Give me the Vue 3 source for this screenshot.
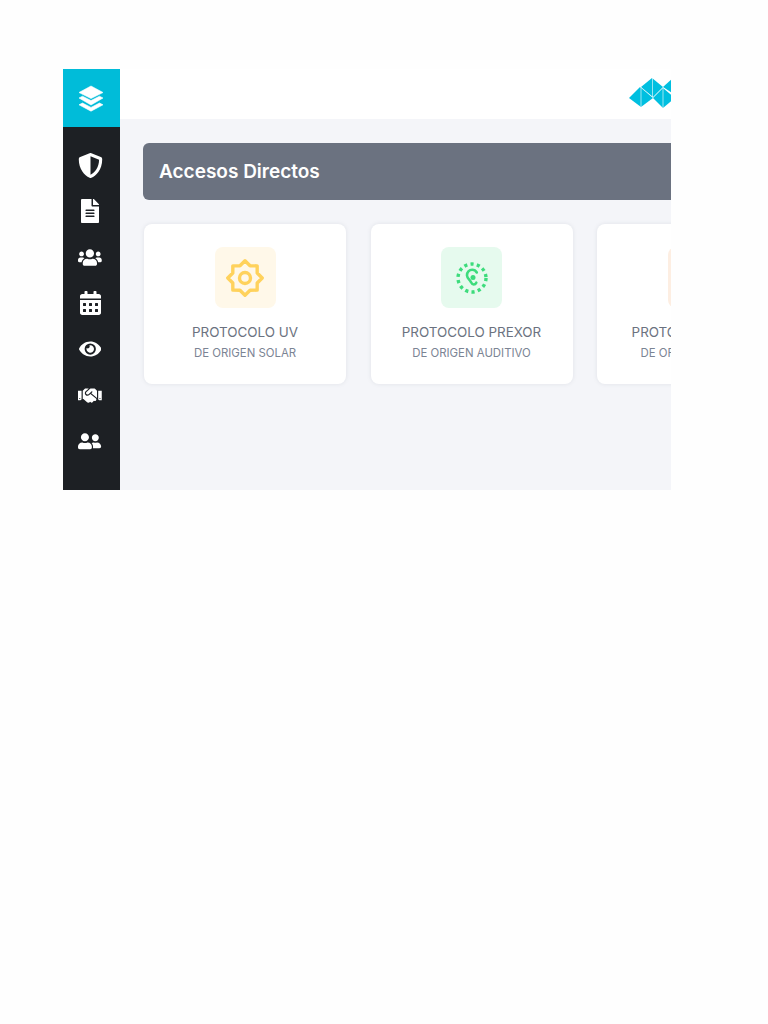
<script setup>
const navIcons = [
  { vb: '0 0 512 512', h: 25, d: 'M466.5 83.7l-192-80a48.15 48.15 0 0 0-36.9 0l-192 80C27.7 91.1 16 108.6 16 128c0 198.5 114.5 335.7 221.5 380.3 11.8 4.9 25.1 4.9 36.9 0C360.1 472.6 496 349.3 496 128c0-19.4-11.7-36.9-29.5-44.3zM256.1 446.3l-.1-381 175.9 73.3c-3.3 151.4-82.1 261.1-175.8 307.7z' },
  { vb: '0 0 384 512', h: 24, d: 'M224 136V0H24C10.7 0 0 10.7 0 24v464c0 13.3 10.7 24 24 24h336c13.3 0 24-10.7 24-24V160H248c-13.2 0-24-10.8-24-24zm64 236c0 6.6-5.4 12-12 12H108c-6.6 0-12-5.4-12-12v-8c0-6.6 5.4-12 12-12h168c6.6 0 12 5.4 12 12v8zm0-64c0 6.6-5.4 12-12 12H108c-6.6 0-12-5.4-12-12v-8c0-6.6 5.4-12 12-12h168c6.6 0 12 5.4 12 12v8zm0-72v8c0 6.6-5.4 12-12 12H108c-6.6 0-12-5.4-12-12v-8c0-6.6 5.4-12 12-12h168c6.6 0 12 5.4 12 12zm96-114.1v6.1H256V0h6.1c6.4 0 12.5 2.5 17 7l97.9 98c4.5 4.5 7 10.6 7 16.9z' },
  { vb: '0 0 640 512', h: 19, d: 'M96 224c35.3 0 64-28.7 64-64s-28.7-64-64-64-64 28.7-64 64 28.7 64 64 64zm448 0c35.3 0 64-28.7 64-64s-28.7-64-64-64-64 28.7-64 64 28.7 64 64 64zm32 32h-64c-17.6 0-33.5 7.1-45.1 18.6 40.3 22.1 68.9 62 75.1 109.4h66c17.7 0 32-14.3 32-32v-32c0-35.3-28.7-64-64-64zm-256 0c61.9 0 112-50.1 112-112S381.9 32 320 32 208 82.1 208 144s50.1 112 112 112zm76.8 32h-8.3c-20.8 10-43.9 16-68.5 16s-47.6-6-68.5-16h-8.3C179.6 288 128 339.6 128 403.2V432c0 26.5 21.5 48 48 48h288c26.5 0 48-21.5 48-48v-28.8c0-63.6-51.6-115.2-115.2-115.2zm-223.7-13.4C161.5 263.1 145.6 256 128 256H64c-35.3 0-64 28.7-64 64v32c0 17.7 14.3 32 32 32h65.9c6.3-47.4 34.9-87.3 75.2-109.4z' },
  { vb: '0 0 448 512', h: 24, d: 'M0 464c0 26.5 21.5 48 48 48h352c26.5 0 48-21.5 48-48V192H0v272zm320-196c0-6.6 5.4-12 12-12h40c6.6 0 12 5.4 12 12v40c0 6.6-5.4 12-12 12h-40c-6.6 0-12-5.4-12-12v-40zm0 128c0-6.6 5.4-12 12-12h40c6.6 0 12 5.4 12 12v40c0 6.6-5.4 12-12 12h-40c-6.6 0-12-5.4-12-12v-40zM192 268c0-6.6 5.4-12 12-12h40c6.6 0 12 5.4 12 12v40c0 6.6-5.4 12-12 12h-40c-6.6 0-12-5.4-12-12v-40zm0 128c0-6.6 5.4-12 12-12h40c6.6 0 12 5.4 12 12v40c0 6.6-5.4 12-12 12h-40c-6.6 0-12-5.4-12-12v-40zM64 268c0-6.6 5.4-12 12-12h40c6.6 0 12 5.4 12 12v40c0 6.6-5.4 12-12 12H76c-6.6 0-12-5.4-12-12v-40zm0 128c0-6.6 5.4-12 12-12h40c6.6 0 12 5.4 12 12v40c0 6.6-5.4 12-12 12H76c-6.6 0-12-5.4-12-12v-40zM400 64h-48V16c0-8.8-7.2-16-16-16h-32c-8.8 0-16 7.2-16 16v48H160V16c0-8.8-7.2-16-16-16h-32c-8.8 0-16 7.2-16 16v48H48C21.5 64 0 85.5 0 112v48h448v-48c0-26.5-21.5-48-48-48z' },
  { vb: '0 0 576 512', h: 20, d: 'M572.52 241.4C518.29 135.59 410.93 64 288 64S57.68 135.64 3.48 241.41a32.35 32.35 0 0 0 0 29.19C57.71 376.41 165.07 448 288 448s230.32-71.64 284.52-177.41a32.35 32.35 0 0 0 0-29.19zM288 400a144 144 0 1 1 144-144 143.93 143.93 0 0 1-144 144zm0-240a95.31 95.31 0 0 0-25.31 3.79 47.85 47.85 0 0 1-66.9 66.9A95.78 95.78 0 1 0 288 160z' },
  { vb: '0 0 640 512', h: 19, d: 'M434.7 64h-85.9c-8 0-15.7 3-21.6 8.4l-98.3 90c-.1.1-.2.3-.3.4-16.6 15.6-16.3 40.5-2.1 56 12.7 13.9 39.4 17.6 56.1 2.7.1-.1.3-.1.4-.2l79.9-73.2c6.5-5.9 16.7-5.5 22.6 1 6 6.5 5.5 16.6-1 22.6l-26.1 23.9L504 313.8c2.9 2.4 5.5 5 7.9 7.7V128l-54.6-54.6c-5.9-6-14.1-9.4-22.6-9.4zM544 128.2v223.9c0 17.7 14.3 32 32 32h64V128.2h-96zm48 223.9c-8.8 0-16-7.2-16-16s7.2-16 16-16 16 7.2 16 16-7.2 16-16 16zM0 384h64c17.7 0 32-14.3 32-32V128.2H0V384zm48-63.9c8.8 0 16 7.2 16 16s-7.2 16-16 16-16-7.2-16-16c0-8.9 7.2-16 16-16zm435.9 18.6L334.6 217.5l-30 27.5c-29.7 27.1-75.2 24.5-101.7-4.4-26.9-29.4-24.8-74.9 4.4-101.7L289.1 64h-83.8c-8.5 0-16.6 3.4-22.6 9.4L128 128v223.9h18.3l90.5 81.9c27.4 22.3 67.7 18.1 90-9.3l.2-.2 17.9 15.5c15.9 13 39.4 10.5 52.3-5.4l31.4-38.6 5.4 4.4c13.7 11.1 33.9 9.1 45-4.7l9.5-11.7c11.2-13.8 9.1-33.9-4.6-45.1z' },
  { vb: '0 0 640 512', h: 18.5, d: 'M192 256c61.9 0 112-50.1 112-112S253.9 32 192 32 80 82.1 80 144s50.1 112 112 112zm76.8 32h-8.3c-20.8 10-43.9 16-68.5 16s-47.6-6-68.5-16h-8.3C51.6 288 0 339.6 0 403.2V432c0 26.5 21.5 48 48 48h288c26.5 0 48-21.5 48-48v-28.8c0-63.6-51.6-115.2-115.2-115.2zM480 256c53 0 96-43 96-96s-43-96-96-96-96 43-96 96 43 96 96 96zm48 32h-3.8c-13.9 4.8-28.6 8-44.2 8s-30.3-3.2-44.2-8H432c-20.4 0-39.2 5.9-55.7 15.4 24.4 26.3 39.7 61.2 39.7 99.8v38.4c0 2.2-.5 4.3-.6 6.4H592c26.5 0 48-21.5 48-48 0-61.9-50.1-112-112-112z' },
]

const cards = [
  { kind: 'sun', title: 'PROTOCOLO UV', sub: 'DE ORIGEN SOLAR' },
  { kind: 'ear', title: 'PROTOCOLO PREXOR', sub: 'DE ORIGEN AUDITIVO' },
  { kind: 'other', title: 'PROTOCOLO TMERT', sub: 'DE ORIGEN QUÍMICO' },
]

const sunPoints = (() => {
  const pts = []
  for (let i = 0; i < 16; i++) {
    const r = i % 2 === 0 ? 17.2 : 13.2
    const a = (i * Math.PI) / 8 - Math.PI / 2
    pts.push(`${(20 + r * Math.cos(a)).toFixed(2)},${(20 + r * Math.sin(a)).toFixed(2)}`)
  }
  return pts.join(' ')
})()
</script>

<template>
  <div class="page">
    <div class="frame">
      <aside class="sidebar">
        <div class="brand">
          <svg class="brand-icon" viewBox="0 0 26 27" fill="#fff" stroke="#fff" stroke-width="0.6" stroke-linejoin="round">
            <polygon points="13,1 25,7.5 13,13.5 1,7.5" />
            <polygon points="1,13 4.5,11.2 13,15.6 21.5,11.2 25,13 13,20" />
            <polygon points="1,19.8 4.5,18 13,22.4 21.5,18 25,19.8 13,26.2" />
          </svg>
        </div>
        <nav class="nav">
          <div v-for="(icon, i) in navIcons" :key="i" class="nav-item">
            <svg :viewBox="icon.vb" :height="icon.h" fill="#fff"><path :d="icon.d" /></svg>
          </div>
        </nav>
      </aside>

      <div class="main">
        <header class="topbar">
          <svg class="logo" viewBox="0 0 46 32" width="46" height="32">
            <g fill="#00bfe0">
              <polygon points="0,21 11,10 24,21 12,30" />
              <polygon points="12,10 23,1 34,10 24,20" />
              <polygon points="24,21 34,11 46,21 34,31" />
              <polygon points="34,10 44,1 46,1 46,18" />
            </g>
            <g stroke="#fff" stroke-width="1" opacity="0.6">
              <line x1="12" y1="10" x2="12" y2="30" />
              <line x1="23.5" y1="1" x2="23.5" y2="20" />
              <line x1="34" y1="11" x2="34" y2="31" />
            </g>
          </svg>
        </header>

        <section class="content">
          <div class="banner">Accesos Directos</div>
          <div class="cards">
            <article v-for="card in cards" :key="card.title" class="card">
              <div class="tile" :class="'tile-' + card.kind">
                <svg v-if="card.kind === 'sun'" viewBox="0 0 40 40" width="40" height="40" fill="none" stroke="#ffd25c" stroke-width="3.4" stroke-linejoin="round">
                  <polygon :points="sunPoints" />
                  <circle cx="20" cy="20" r="5.5" />
                </svg>
                <svg v-else-if="card.kind === 'ear'" viewBox="0 0 40 40" width="40" height="40" fill="none" stroke="#3ddc7c">
                  <circle cx="20" cy="20" r="14" stroke-width="3.4" stroke-dasharray="3.2 3.2" />
                  <path d="M24.8 14.5c-1-1.8-2.6-2.7-4.6-2.7-3 0-5.4 2.5-5.2 5.7.2 2.7 2 3.6 3.2 5.4 1 1.6 1.6 3.6 3.4 3.6 1.2 0 2.2-.7 2.7-1.8" stroke-width="2.6" stroke-linecap="round" />
                  <circle cx="21" cy="19.5" r="2.5" fill="#3ddc7c" stroke="none" />
                </svg>
              </div>
              <div class="title">{{ card.title }}</div>
              <div class="sub">{{ card.sub }}</div>
            </article>
          </div>
        </section>
      </div>
    </div>
  </div>
</template>

<style scoped>
.page {
  box-sizing: border-box;
  padding: 69px 97px 0 63px;
  height: 1024px;
  background: #fefefe;
  font-family: Inter, "Liberation Sans", sans-serif;
}
.frame {
  display: flex;
  height: 421px;
  overflow: hidden;
  background: #fff;
}
.sidebar {
  flex: 0 0 57px;
  display: flex;
  flex-direction: column;
  background: #1d2024;
}
.brand {
  height: 58px;
  flex-shrink: 0;
  display: flex;
  align-items: center;
  justify-content: center;
  padding-right: 2px;
  background: #00bcd9;
}
.brand-icon {
  width: 26px;
  height: 27px;
}
.nav {
  display: flex;
  flex-direction: column;
  padding-top: 15px;
}
.nav-item {
  height: 46px;
  display: flex;
  align-items: center;
  justify-content: center;
  padding-right: 3px;
}
.nav-item svg {
  display: block;
  max-width: 25px;
}
.main {
  flex: 1;
  min-width: 0;
  display: flex;
  flex-direction: column;
}
.topbar {
  box-sizing: border-box;
  height: 50px;
  flex-shrink: 0;
  display: flex;
  align-items: flex-start;
  justify-content: flex-end;
  padding-top: 8px;
  overflow: hidden;
  background: #fff;
}
.logo {
  display: block;
  flex-shrink: 0;
  margin-right: -4px;
}
.content {
  flex: 1;
  padding: 24px 0 0 23px;
  background: #f4f5f9;
  overflow: hidden;
}
.banner {
  height: 57px;
  display: flex;
  align-items: center;
  padding-left: 16px;
  margin-bottom: 24px;
  border-radius: 6px 0 0 6px;
  background: #6b7280;
  color: #fff;
  font-size: 19px;
  font-weight: 600;
}
.cards {
  display: flex;
  gap: 24.5px;
  padding-left: 1px;
}
.card {
  flex: 0 0 202px;
  height: 160px;
  padding-top: 23px;
  box-sizing: border-box;
  display: flex;
  flex-direction: column;
  align-items: center;
  border-radius: 8px;
  background: #fff;
  box-shadow: 0 0 4px rgba(107, 114, 128, 0.14);
}
.tile {
  width: 61px;
  height: 61px;
  display: flex;
  align-items: center;
  justify-content: center;
  border-radius: 8px;
}
.tile-sun { background: #fff8e9; }
.tile-ear { background: #e6faee; }
.tile-other { background: #fdeee2; }
.title {
  margin-top: 15px;
  color: #6b7280;
  font-size: 13.4px;
  font-weight: 400;
  line-height: 18px;
  white-space: nowrap;
}
.sub {
  margin-top: 4px;
  color: #7b8494;
  font-size: 11.4px;
  line-height: 16px;
  white-space: nowrap;
}
</style>
